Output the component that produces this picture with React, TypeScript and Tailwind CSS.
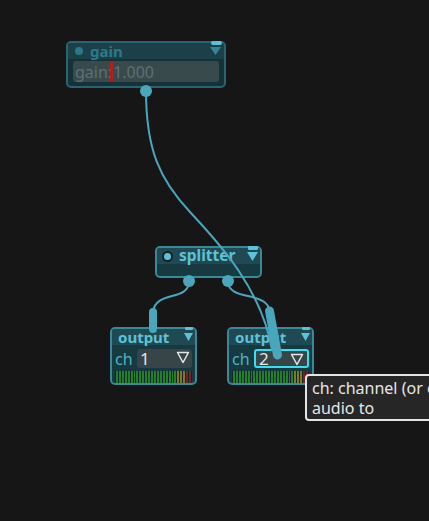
import React from "react";

const font = { fontFamily: '"Noto Sans", "Open Sans", sans-serif' };

function Meter() {
  const bars = Array.from({ length: 26 }, (_, i) => i);
  return (
    <div className="flex gap-[1px] h-[12px] mt-[3px] bg-[#10282c] px-[1px]">
      {bars.map((i) => (
        <div
          key={i}
          className={
            "w-[2px] h-full " +
            (i >= 24 ? "bg-[#7c2020]" : i >= 21 ? "bg-[#7d7a22]" : "bg-[#23802a]")
          }
        />
      ))}
    </div>
  );
}

function OutputNode({ left, ch, focused }: { left: string; ch: string; focused?: boolean }) {
  return (
    <div className={`absolute top-[327px] ${left} w-[87px] h-[58px] rounded-[5px] border-2 border-[#3a8898] bg-[#173a40] overflow-visible`}>
      <div className="relative h-[16px] bg-[#1f4a53] rounded-t-[3px] flex items-center pl-[6px]">
        <span className="text-[15px] font-bold text-[#5ec2d7] leading-none">output</span>
        <div className="absolute right-[2px] -top-[2px] w-[8px] h-[3px] rounded-[1px] bg-[#5ec2d7]" />
        <svg className="absolute right-[2px] top-[4px]" width="9" height="8" viewBox="0 0 9 8">
          <polygon points="0,0 9,0 4.5,8" fill="#5ec2d7" />
        </svg>
      </div>
      <div className="px-[3px] pt-[4px]">
        <div className="flex items-center h-[19px]">
          <span className="text-[16px] text-[#4fb2c6] w-[22px] leading-none">ch</span>
          <div
            className={
              "relative flex-1 h-[19px] rounded-[3px] bg-[#384548] flex items-center pl-[3px] " +
              (focused ? "border-2 border-[#2fe3f3]" : "")
            }
          >
            <span className="text-[17px] text-[#e6e6e6] leading-none">{ch}</span>
            <svg className={"absolute top-[2px] " + (focused ? "right-[3px]" : "right-[2px]")} width="14" height="13" viewBox="0 0 14 13">
              <polygon points="1.5,1.5 12.5,1.5 7,11.5" fill="none" stroke="#e6e6e6" strokeWidth="1.5" strokeLinejoin="round" />
            </svg>
          </div>
        </div>
        <Meter />
      </div>
    </div>
  );
}

export default function App() {
  return (
    <div className="relative w-[429px] h-[521px] bg-[#161616] overflow-hidden" style={font}>
      {/* gain node (dimmed) */}
      <div className="absolute left-[66px] top-[41px] w-[160px] h-[47px] rounded-[5px] border-2 border-[#2b6370] bg-[#163239]">
        <div className="relative h-[16px] bg-[#1c4048] rounded-t-[3px] flex items-center pl-[7px]">
          <div className="w-[8px] h-[8px] rounded-full bg-[#2a7888] mr-[7px]" />
          <span className="text-[15px] font-bold text-[#2a7a8a] leading-none">gain</span>
          <div className="absolute right-[2px] -top-[2px] w-[11px] h-[4px] rounded-[2px] bg-[#5ec2d7]" />
          <svg className="absolute right-[3px] top-[4px]" width="11" height="8" viewBox="0 0 11 8">
            <polygon points="0,0 11,0 5.5,8" fill="#3a8393" />
          </svg>
        </div>
        <div className="px-[5px] pt-[2px]">
          <div className="relative h-[21px] rounded-[3px] bg-[#394a4d] flex items-center pl-[2px]">
            <span className="text-[16px] text-[#5f6f72] leading-none">gain:</span>
            <div className="w-[3px] h-[19px] bg-[#b51d1d] -ml-[2px]" />
            <span className="text-[16px] text-[#5f6f72] leading-none">1.000</span>
          </div>
        </div>
      </div>

      {/* splitter node */}
      <div className="absolute left-[155px] top-[246px] w-[107px] h-[32px] rounded-[5px] border-2 border-[#3a8898] bg-[#173a40]">
        <div className="relative h-[16px] bg-[#1f4a53] rounded-t-[3px] flex items-center pl-[5px]">
          <div className="w-[11px] h-[11px] rounded-full bg-[#0d2328] flex items-center justify-center mr-[6px]">
            <div className="w-[7px] h-[7px] rounded-full bg-[#5ec2d7]" />
          </div>
          <span className="text-[15.5px] font-bold text-[#5ec2d7] leading-none">splitter</span>
          <div className="absolute right-[2px] -top-[2px] w-[10px] h-[4px] rounded-[1px] bg-[#5ec2d7]" />
          <svg className="absolute right-[2px] top-[4px]" width="11" height="9" viewBox="0 0 11 9">
            <polygon points="0,0 11,0 5.5,9" fill="#5ec2d7" />
          </svg>
        </div>
      </div>

      <OutputNode left="left-[110px]" ch="1" />
      <OutputNode left="left-[227px]" ch="2" focused />

      {/* cables */}
      <svg className="absolute left-0 top-0 pointer-events-none" width="429" height="521" viewBox="0 0 429 521">
        <g stroke="#4aa7bb" fill="none" strokeLinecap="round">
          <path d="M189,281 C189,302 155,290 153,312" strokeWidth="2" />
          <path d="M228,281 C228,302 268,290 270,312" strokeWidth="2" />
          <path d="M146,91 C146,150 160,180 190,212 S262,290 272,350" strokeWidth="2" />
          <line x1="153" y1="312" x2="153" y2="329" strokeWidth="8" />
          <line x1="269.5" y1="311" x2="277.5" y2="355" strokeWidth="9" />
        </g>
        <g fill="#4aa7bb">
          <circle cx="146" cy="91" r="6" />
          <circle cx="189" cy="281" r="6" />
          <circle cx="228" cy="281" r="6" />
        </g>
      </svg>

      {/* tooltip */}
      <div className="absolute left-[305px] top-[374px] w-[200px] h-[47px] rounded-[4px] border-2 border-[#e4e4e4] bg-[#262626] pl-[5px] pt-[2px]">
        <div className="text-[16px] leading-[20px] text-[#e6e6e6] whitespace-nowrap">ch: channel (or channels) to send</div>
        <div className="text-[16px] leading-[20px] text-[#e6e6e6] whitespace-nowrap">audio to</div>
      </div>
    </div>
  );
}
